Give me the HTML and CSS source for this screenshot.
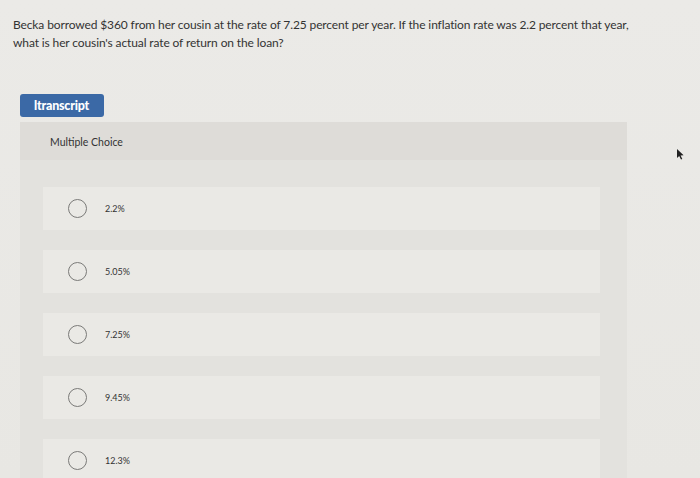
FILE: index.html
```html
<!DOCTYPE html>
<html>
<head>
<meta charset="utf-8">
<link rel="stylesheet" href="styles.css">
</head>
<body>
<div class="page">
  <p class="question">Becka borrowed $360 from her cousin at the rate of 7.25 percent per year. If the inflation rate was 2.2 percent that year, what is her cousin's actual rate of return on the loan?</p>
  <div class="toolbar"><span class="transcript-btn">ltranscript</span></div>
  <div class="panel">
    <div class="panel-head">Multiple Choice</div>
    <div class="options">
      <div class="option"><span class="radio"></span><span class="label">2.2%</span></div>
      <div class="option"><span class="radio"></span><span class="label">5.05%</span></div>
      <div class="option"><span class="radio"></span><span class="label">7.25%</span></div>
      <div class="option"><span class="radio"></span><span class="label">9.45%</span></div>
      <div class="option"><span class="radio"></span><span class="label">12.3%</span></div>
    </div>
  </div>
  <svg class="cursor" width="9" height="12" viewBox="0 0 9 12"><path d="M1 1 L1 10 L3.2 8 L5 11.5 L6.3 10.9 L4.6 7.5 L7.6 7.3 Z" fill="#222"/></svg>
</div>
</body>
</html>
```
FILE: styles.css
```css
html, body {
  margin: 0;
  padding: 0;
  background: #e9e8e4;
}
.page {
  position: relative;
  width: 700px;
  height: 478px;
  overflow: hidden;
  font-family: Lato, "Open Sans", sans-serif;
  color: #333;
  background: linear-gradient(180deg, #ebeae7 0%, #e8e7e3 100%);
}
.question {
  margin: 0;
  padding: 16px 52px 0 13px;
  font-size: 12px;
  line-height: 18px;
  letter-spacing: -0.12px;
}
.toolbar {
  padding: 42px 0 0 20px;
  height: 28px;
}
.transcript-btn {
  display: inline-block;
  background: #3b69a6;
  color: #fff;
  font-weight: 900;
  font-size: 12.5px;
  line-height: 23px;
  height: 23px;
  padding: 0 15px 0 14px;
  border-radius: 3px;
  letter-spacing: -0.2px;
}
.panel {
  margin: 0 73px 0 20px;
  background: #e3e2de;
  height: 400px;
}
.panel-head {
  background: #dedcd8;
  height: 38px;
  line-height: 40px;
  padding-left: 30px;
  font-size: 10.5px;
  color: #333;
}
.options {
  padding: 27px 27px 0 23px;
  display: flex;
  flex-direction: column;
  gap: 20px;
}
.option {
  display: flex;
  align-items: center;
  height: 43px;
  background: #eae9e5;
  padding-left: 25px;
}
.radio {
  border: 1.5px solid #7a7a78;
  border-radius: 50%;
  box-sizing: border-box;
  width: 19px;
  height: 19px;
}
.label {
  margin-left: 18px;
  font-size: 9px;
  color: #333;
}
.cursor {
  position: absolute;
  left: 676px;
  top: 148px;
}
```
